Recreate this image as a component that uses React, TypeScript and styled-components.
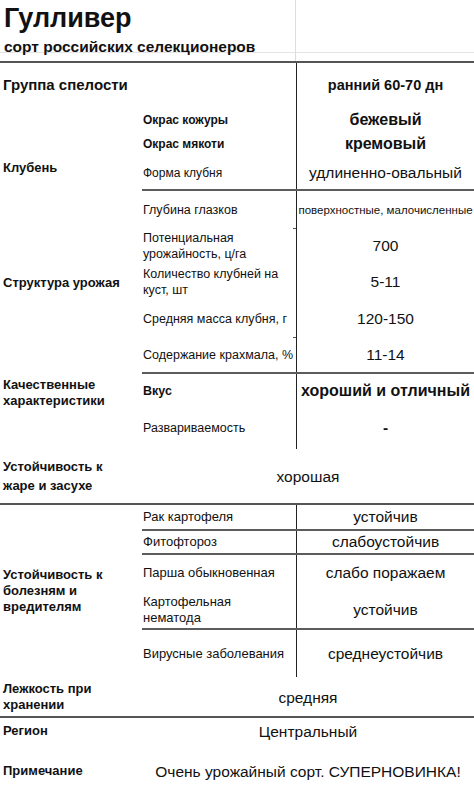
import React from 'react';
import styled, { createGlobalStyle } from 'styled-components';

const GlobalStyle = createGlobalStyle`
  *, *::before, *::after { box-sizing: border-box; }
  html, body { margin: 0; padding: 0; background: #fff; }
  body {
    font-family: 'Liberation Sans', Arial, sans-serif;
    color: #111;
  }
`;

const Page = styled.div`
  width: 474px;
  height: 798px;
  overflow: hidden;
  background: #fff;
`;

const Header = styled.header`
  display: grid;
  grid-template-columns: 296px 1fr;
  grid-template-rows: 53px 8px;
  border-bottom: 2px solid #555;
`;

const TitleCell = styled.div`
  padding: 3px 0 0 4px;
  border-right: 1px solid #dcdcdc;
  border-bottom: 1px solid #e4e4e4;
`;

const HeaderFill = styled.div<{ $right?: boolean; $bottom?: boolean }>`
  border-right: ${(p) => (p.$right ? '1px solid #dcdcdc' : 'none')};
  border-bottom: ${(p) => (p.$bottom ? '1px solid #e4e4e4' : 'none')};
`;

const Title = styled.h1`
  margin: 0;
  font-size: 27px;
  line-height: 30px;
  font-weight: bold;
`;

const Subtitle = styled.p`
  margin: 5px 0 0;
  font-size: 15.5px;
  line-height: 18px;
  font-weight: bold;
`;

const Section = styled.section<{ $h?: number; $rule?: boolean }>`
  display: flex;
  height: ${(p) => (p.$h ? `${p.$h}px` : 'auto')};
  border-bottom: ${(p) => (p.$rule ? '2px solid #555' : 'none')};
`;

const GroupLabel = styled.div<{ $pad?: number; $lh?: number; $size?: number }>`
  width: 142px;
  flex: none;
  display: flex;
  align-items: ${(p) => (p.$pad == null ? 'center' : 'flex-start')};
  padding: ${(p) => p.$pad ?? 0}px 0 0 3px;
  font-size: ${(p) => p.$size ?? 13}px;
  line-height: ${(p) => p.$lh ?? 16}px;
  font-weight: bold;
`;

const Rows = styled.div`
  flex: 1;
  display: flex;
  flex-direction: column;
`;

const Row = styled.div<{ $h: number; $rule?: boolean }>`
  display: grid;
  grid-template-columns: 154px 1fr;
  height: ${(p) => p.$h}px;
  border-bottom: ${(p) => (p.$rule ? '2px solid #5c5c5c' : 'none')};
`;

const Name = styled.div<{ $bold?: boolean; $size?: number }>`
  display: flex;
  align-items: center;
  padding-left: 1px;
  font-size: ${(p) => p.$size ?? 12.5}px;
  line-height: 16px;
  font-weight: ${(p) => (p.$bold ? 'bold' : 'normal')};
`;

const Value = styled.div<{ $bold?: boolean; $size?: number; $tick?: boolean }>`
  position: relative;
  display: flex;
  align-items: center;
  justify-content: center;
  text-align: center;
  border-left: 1px solid #222;
  font-size: ${(p) => p.$size ?? 15.5}px;
  line-height: 18px;
  font-weight: ${(p) => (p.$bold ? 'bold' : 'normal')};

  &::before {
    content: '';
    display: ${(p) => (p.$tick ? 'block' : 'none')};
    position: absolute;
    top: 0;
    left: -4px;
    width: 3px;
    height: 1px;
    background: #555;
  }
`;

const WideValue = styled.div`
  flex: 1;
  display: flex;
  align-items: center;
  justify-content: center;
  font-size: 15.5px;
  line-height: 18px;
  padding-top: 2px;
`;

const App = (): React.JSX.Element => (
  <Page>
    <GlobalStyle />
    <Header>
      <TitleCell>
        <Title>Гулливер</Title>
        <Subtitle>сорт российских селекционеров</Subtitle>
      </TitleCell>
      <HeaderFill $bottom />
      <HeaderFill $right />
      <HeaderFill />
    </Header>

    <Section>
      <GroupLabel $size={15}>Группа спелости</GroupLabel>
      <Rows>
        <Row $h={44}>
          <Name />
          <Value $bold $size={14.5}>ранний 60-70 дн</Value>
        </Row>
      </Rows>
    </Section>

    <Section>
      <GroupLabel $pad={53}>Клубень</GroupLabel>
      <Rows>
        <Row $h={25}>
          <Name $bold $size={12}>Окрас кожуры</Name>
          <Value $bold $size={16}>бежевый</Value>
        </Row>
        <Row $h={24}>
          <Name $bold $size={12}>Окрас мякоти</Name>
          <Value $bold $size={16}>кремовый</Value>
        </Row>
        <Row $h={35} $rule>
          <Name $size={12}>Форма клубня</Name>
          <Value>удлиненно-овальный</Value>
        </Row>
      </Rows>
    </Section>

    <Section>
      <GroupLabel>Структура урожая</GroupLabel>
      <Rows>
        <Row $h={37}>
          <Name>Глубина глазков</Name>
          <Value $size={11.5}>поверхностные, малочисленные</Value>
        </Row>
        <Row $h={36}>
          <Name>
            Потенциальная
            <br />
            урожайность, ц/га
          </Name>
          <Value $tick>700</Value>
        </Row>
        <Row $h={36}>
          <Name>
            Количество клубней на
            <br />
            куст, шт
          </Name>
          <Value>5-11</Value>
        </Row>
        <Row $h={37}>
          <Name>Средняя масса клубня, г</Name>
          <Value>120-150</Value>
        </Row>
        <Row $h={37} $rule>
          <Name>Содержание крахмала, %</Name>
          <Value $tick>11-14</Value>
        </Row>
      </Rows>
    </Section>

    <Section>
      <GroupLabel $pad={3}>
        Качественные
        <br />
        характеристики
      </GroupLabel>
      <Rows>
        <Row $h={33}>
          <Name $bold $size={12.5}>Вкус</Name>
          <Value $bold $size={16}>хороший и отличный</Value>
        </Row>
        <Row $h={42}>
          <Name>Развариваемость</Name>
          <Value $bold>-</Value>
        </Row>
      </Rows>
    </Section>

    <Section $h={56} $rule>
      <GroupLabel $lh={19}>
        Устойчивость к
        <br />
        жаре и засухе
      </GroupLabel>
      <WideValue>хорошая</WideValue>
    </Section>

    <Section>
      <GroupLabel>
        Устойчивость к
        <br />
        болезням и
        <br />
        вредителям
      </GroupLabel>
      <Rows>
        <Row $h={26} $rule>
          <Name $size={13}>Рак картофеля</Name>
          <Value>устойчив</Value>
        </Row>
        <Row $h={24} $rule>
          <Name $size={13}>Фитофтороз</Name>
          <Value>слабоустойчив</Value>
        </Row>
        <Row $h={36}>
          <Name $size={13}>Парша обыкновенная</Name>
          <Value>слабо поражаем</Value>
        </Row>
        <Row $h={39} $rule>
          <Name $size={13}>
            Картофельная
            <br />
            нематода
          </Name>
          <Value>устойчив</Value>
        </Row>
        <Row $h={47}>
          <Name $size={13}>Вирусные заболевания</Name>
          <Value>среднеустойчив</Value>
        </Row>
      </Rows>
    </Section>

    <Section $h={41} $rule>
      <GroupLabel>
        Лежкость при
        <br />
        хранении
      </GroupLabel>
      <WideValue>средняя</WideValue>
    </Section>

    <Section $h={25}>
      <GroupLabel>Регион</GroupLabel>
      <WideValue>Центральный</WideValue>
    </Section>

    <Section $h={55}>
      <GroupLabel>Примечание</GroupLabel>
      <WideValue>Очень урожайный сорт. СУПЕРНОВИНКА!</WideValue>
    </Section>
  </Page>
);

export default App;
